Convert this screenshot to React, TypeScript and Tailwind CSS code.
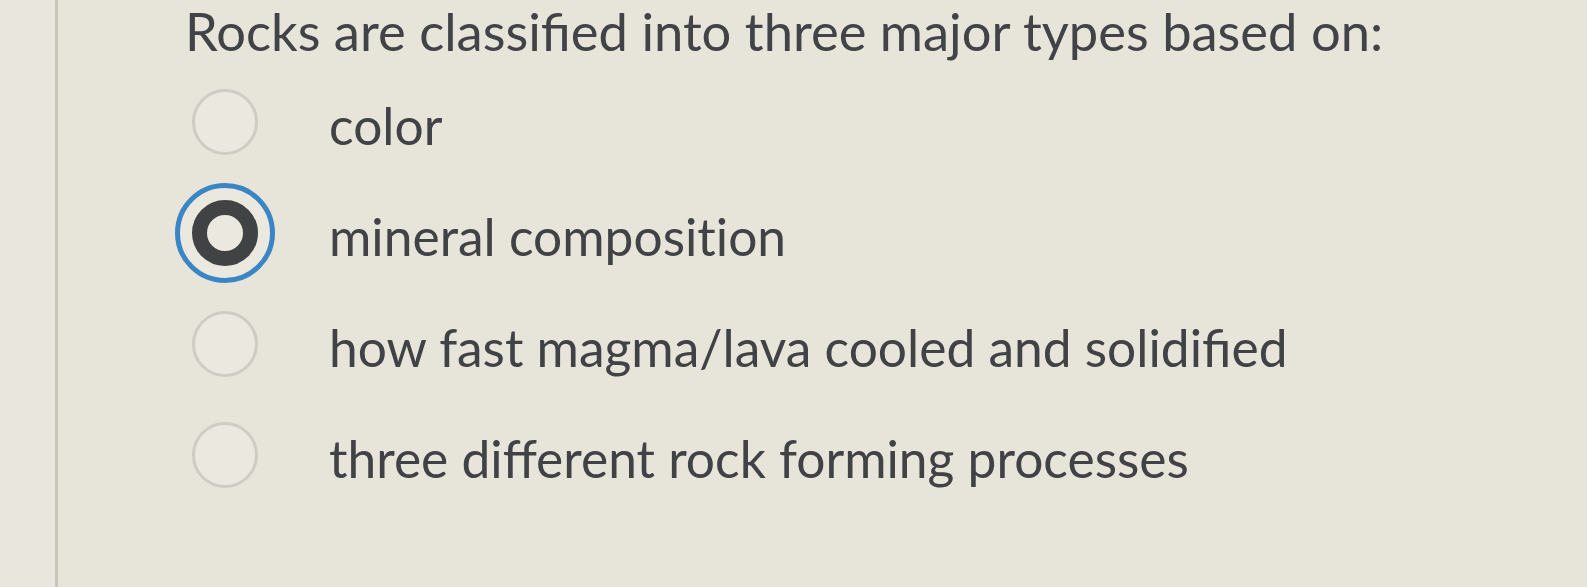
import React from "react";

const options = [
  { text: "color", noLiga: false },
  { text: "mineral composition", noLiga: true },
  { text: "how fast magma/lava cooled and solidified", noLiga: false },
  { text: "three different rock forming processes", noLiga: false },
];

function Radio({ checked }: { checked: boolean }) {
  if (checked) {
    return (
      <div className="w-[100px] h-[100px] rounded-full border-[5px] border-[#3a86c4] flex items-center justify-center bg-[#ebe8df]">
        <div className="w-[66px] h-[66px] rounded-full border-[15px] border-[#404244] bg-[#ebe8df]" />
      </div>
    );
  }
  return <div className="w-[66px] h-[66px] rounded-full border-[3px] border-[#cfccc4] bg-[#ebe8df]" />;
}

export default function App() {
  return (
    <div
      className="w-[1587px] h-[587px] bg-[#e7e4da] flex overflow-hidden"
      style={{ fontFamily: "Lato, 'Open Sans', sans-serif" }}
    >
      <div className="w-[58px] h-full border-r-[3px] border-[#c9c5bb] bg-[#e9e6de]" />
      <div className="flex flex-col pl-[127px]">
        <h1 className="text-[52.5px] leading-[62px] text-[#414347] font-normal">
          Rocks are classified into three major types based on:
        </h1>
        <div className="flex flex-col mt-[7px]">
          {options.map((o, i) => (
            <div key={o.text} className="flex items-center h-[111px]">
              <div className="w-[100px] flex items-center justify-center -ml-[10px] mb-[6px]">
                <Radio checked={i === 1} />
              </div>
              <span
                className={
                  o.noLiga
                    ? "ml-[54px] text-[51.5px] leading-[62px] text-[#404246] [font-variant-ligatures:none]"
                    : "ml-[54px] text-[51.5px] leading-[62px] text-[#404246]"
                }
              >
                {o.text}
              </span>
            </div>
          ))}
        </div>
      </div>
    </div>
  );
}
